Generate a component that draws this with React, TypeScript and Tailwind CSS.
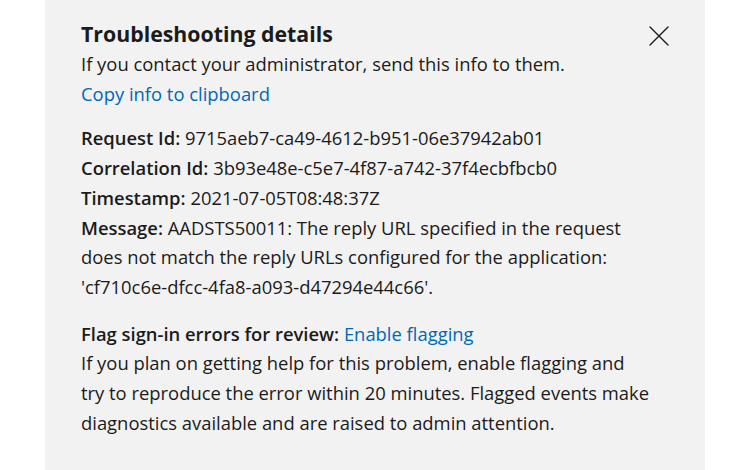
import { X } from 'lucide-react'

const details = [
  { label: 'Request Id:', value: '9715aeb7-ca49-4612-b951-06e37942ab01' },
  { label: 'Correlation Id:', value: '3b93e48e-c5e7-4f87-a742-37f4ecbfbcb0' },
  { label: 'Timestamp:', value: '2021-07-05T08:48:37Z' },
]

export default function App() {
  return (
    <div className="min-h-[470px] bg-white font-['Open_Sans',sans-serif] text-[#1b1b1b]">
      <div className="ml-[45px] w-[660px] min-h-[470px] bg-[#f2f2f2] pl-[36px] pr-[36px] pt-[19px]">
        <div className="flex items-start justify-between">
          <div>
            <h2 className="text-[21.3px] font-bold leading-[30px]">Troubleshooting details</h2>
            <p className="text-[18.4px] leading-[29.7px]">If you contact your administrator, send this info to them.</p>
            <a className="text-[18.4px] leading-[29.7px] text-[#0067b8]">Copy info to clipboard</a>
          </div>
          <button className="-mt-[1px] -mr-[8px] text-[#1b1b1b]">
            <X size={36} strokeWidth={0.9} />
          </button>
        </div>

        <div className="mt-[15px] text-[18.4px] leading-[29.7px]">
          {details.map(d => (
            <div key={d.label}>
              <span className="font-semibold">{d.label}</span> {d.value}
            </div>
          ))}
          <div>
            <span className="font-semibold">Message:</span> AADSTS50011: The reply URL specified in the request
            <br />
            does not match the reply URLs configured for the application:
            <br />
            'cf710c6e-dfcc-4fa8-a093-d47294e44c66'.
          </div>
        </div>

        <div className="mt-[17px] text-[18.4px] leading-[29.7px]">
          <div>
            <span className="font-semibold">Flag sign-in errors for review:</span>{' '}
            <a className="text-[#0067b8]">Enable flagging</a>
          </div>
          <p>
            If you plan on getting help for this problem, enable flagging and
            <br />
            try to reproduce the error within 20 minutes. Flagged events make
            <br />
            diagnostics available and are raised to admin attention.
          </p>
        </div>
      </div>
    </div>
  )
}
